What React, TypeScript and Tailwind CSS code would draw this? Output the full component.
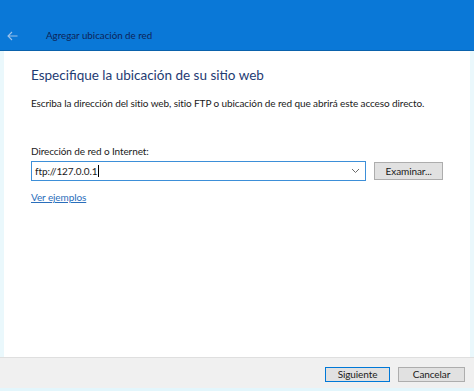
import React from "react";

const font = { fontFamily: 'Lato, "Noto Sans", sans-serif' };

function BackArrow() {
  return (
    <svg width="11" height="10" viewBox="0 0 11 10" fill="none">
      <path d="M5 1 L1 5 L5 9 M1 5 H10.5" stroke="#9cc2ea" strokeWidth="1.1" />
    </svg>
  );
}

function Chevron() {
  return (
    <svg width="9" height="6" viewBox="0 0 9 6" fill="none">
      <path d="M1 1 L4.5 4.5 L8 1" stroke="#6b6b6b" strokeWidth="1" />
    </svg>
  );
}

export default function App() {
  return (
    <div
      className="flex h-[391px] w-[474px] flex-col overflow-hidden bg-white text-[#1a1a1a]"
      style={font}
    >
      <header className="flex h-[51px] shrink-0 items-start border-b border-[#0a62ac] bg-[#0a78d7] pt-[29px]">
        <div className="ml-[7px] flex h-[13px] w-[39px] items-center">
          <BackArrow />
        </div>
        <span className="text-[9.75px] leading-[13px] text-[#0d2457]">Agregar ubicación de red</span>
      </header>

      <main className="flex flex-1 flex-col border-x-[4px] border-[#eaf8fc] px-[27px]">
        <h1 className="mt-[14px] text-[13.5px] leading-[20px] text-[#1e3b73]">
          Especifique la ubicación de su sitio web
        </h1>
        <p className="mt-[11px] whitespace-nowrap text-[10px] leading-[14px] tracking-[-0.1px]">
          Escriba la dirección del sitio web, sitio FTP o ubicación de red que abrirá este acceso directo.
        </p>

        <label className="mt-[34px] text-[10px] leading-[14px] tracking-[-0.1px]">
          Dirección de red o Internet:
        </label>
        <div className="mt-[3px] flex items-center gap-[8px]">
          <div className="flex h-[20px] w-[337px] items-center border border-[#3d8fd8] pl-[3px] pr-[5px]">
            <span className="text-[10px] tracking-[-0.1px]">ftp://127.0.0.1</span>
            <span className="ml-[1px] h-[12px] w-px bg-black" />
            <span className="ml-auto flex">
              <Chevron />
            </span>
          </div>
          <button className="h-[18px] w-[69px] border border-[#adadad] bg-[#e1e1e1] text-[10px] tracking-[-0.1px]">
            Examinar...
          </button>
        </div>
        <a className="mt-[9px] self-start text-[10px] leading-[14px] tracking-[-0.1px] text-[#2a6ebb] underline">
          Ver ejemplos
        </a>
      </main>

      <footer className="flex h-[31px] shrink-0 items-start justify-end gap-[8px] border-t border-[#dfdfdf] bg-[#f0f0f0] pr-[9px] pt-[9px]">
        <button className="h-[15px] w-[65px] border border-[#0078d7] bg-[#e1e1e1] text-[10px] leading-[13px] tracking-[-0.1px]">
          Siguiente
        </button>
        <button className="h-[15px] w-[67px] border border-[#adadad] bg-[#e1e1e1] text-[10px] leading-[13px] tracking-[-0.1px]">
          Cancelar
        </button>
      </footer>
      <div className="h-[3px] shrink-0 bg-[#e3f6fc]" />
    </div>
  );
}
